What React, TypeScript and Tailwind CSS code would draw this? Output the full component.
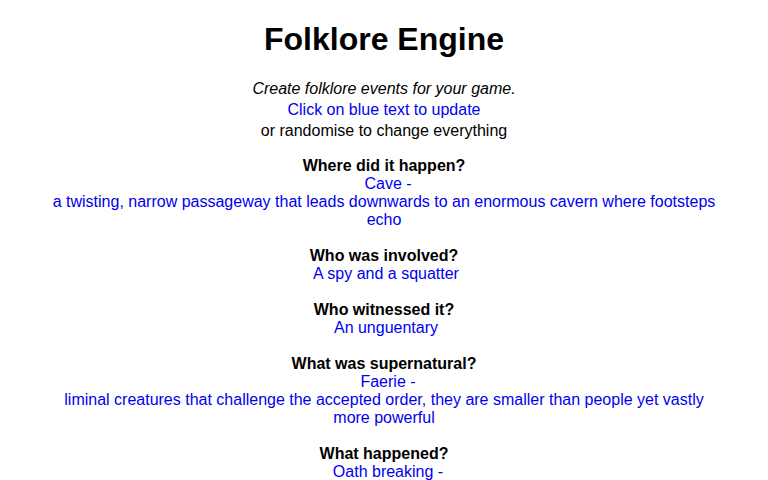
const sections: { question: string; answer: string; detail?: string }[] = [
    {
        question: "Where did it happen?",
        answer: "Cave -",
        detail: "a twisting, narrow passageway that leads downwards to an enormous cavern where footsteps echo",
    },
    { question: "Who was involved?", answer: "A spy and a squatter" },
    { question: "Who witnessed it?", answer: "An unguentary" },
    {
        question: "What was supernatural?",
        answer: "Faerie -",
        detail: "liminal creatures that challenge the accepted order, they are smaller than people yet vastly more powerful",
    },
    { question: "What happened?", answer: "Oath breaking -" },
];

export default function App() {
    return (
        <div className="bg-white text-black text-center text-[16px] font-['Liberation_Sans',Arial,sans-serif] h-[480px] overflow-hidden">
            <h1 className="text-[32px] font-bold leading-[37px] pt-[21px] mb-[20px]">Folklore Engine</h1>
            <div className="leading-[21px]">
                <p className="italic">Create folklore events for your game.</p>
                <p className="text-[#0000ee] cursor-pointer">Click on blue text to update</p>
                <p>or randomise to change everything</p>
            </div>
            <div className="w-[670px] mx-auto mt-[16px] flex flex-col gap-[18px] leading-[18px]">
                {sections.map((s) => (
                    <div key={s.question}>
                        <div className="font-bold">{s.question}</div>
                        <div className={s.answer.endsWith("-") ? "text-[#0000ee] cursor-pointer pl-[8px]" : "text-[#0000ee] cursor-pointer pl-[4px]"}>
                            {s.answer}
                        </div>
                        {s.detail && <div className="text-[#0000ee] cursor-pointer">{s.detail}</div>}
                    </div>
                ))}
            </div>
        </div>
    )
}
